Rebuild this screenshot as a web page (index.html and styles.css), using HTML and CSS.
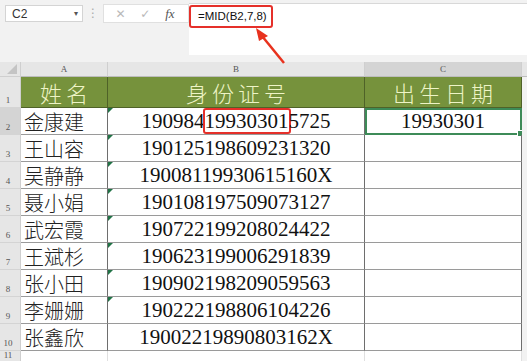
FILE: index.html
```html
<!DOCTYPE html>
<html lang="zh-CN">
<head>
    <meta charset="UTF-8">
    <title>MID</title>
    <link rel="stylesheet" href="styles.css">
</head>
<body>
    <div class="sheet">
        <div class="toolbar">
            <div class="name-box"><span>C2</span><span class="caret">▾</span></div>
            <div class="grip">⋮</div>
            <div class="fx-group">
                <span class="fx-btn">✕</span>
                <span class="fx-btn">✓</span>
                <span class="fx-btn fx">fx</span>
            </div>
            <div class="formula"><span class="formula-text">=MID(B2,7,8)</span></div>
        </div>

        <div class="grid">
            <div class="corner"><span class="corner-tri"></span></div>
            <div class="col-head">A</div>
            <div class="col-head">B</div>
            <div class="col-head sel">C</div>
            <div class="col-head tail"></div>

            <div class="row-head">1</div>
            <div class="cell title name">姓名</div>
            <div class="cell title">身份证号</div>
            <div class="cell title">出生日期</div>
            <div class="cell tail"></div>

            <div class="row-head sel">2</div>
            <div class="cell name">金康建</div>
            <div class="cell id mark">190984<span class="hit">19930301</span>5725</div>
            <div class="cell id active">19930301</div>
            <div class="cell tail"></div>

            <div class="row-head">3</div>
            <div class="cell name">王山容</div>
            <div class="cell id mark">190125198609231320</div>
            <div class="cell"></div>
            <div class="cell tail"></div>

            <div class="row-head">4</div>
            <div class="cell name">吴静静</div>
            <div class="cell id mark">19008119930615160X</div>
            <div class="cell"></div>
            <div class="cell tail"></div>

            <div class="row-head">5</div>
            <div class="cell name">聂小娟</div>
            <div class="cell id mark">190108197509073127</div>
            <div class="cell"></div>
            <div class="cell tail"></div>

            <div class="row-head">6</div>
            <div class="cell name">武宏霞</div>
            <div class="cell id mark">190722199208024422</div>
            <div class="cell"></div>
            <div class="cell tail"></div>

            <div class="row-head">7</div>
            <div class="cell name">王斌杉</div>
            <div class="cell id mark">190623199006291839</div>
            <div class="cell"></div>
            <div class="cell tail"></div>

            <div class="row-head">8</div>
            <div class="cell name">张小田</div>
            <div class="cell id mark">190902198209059563</div>
            <div class="cell"></div>
            <div class="cell tail"></div>

            <div class="row-head">9</div>
            <div class="cell name">李姗姗</div>
            <div class="cell id mark">190222198806104226</div>
            <div class="cell"></div>
            <div class="cell tail"></div>

            <div class="row-head">10</div>
            <div class="cell name">张鑫欣</div>
            <div class="cell id">19002219890803162X</div>
            <div class="cell"></div>
            <div class="cell tail"></div>

            <div class="row-head">11</div>
            <div class="cell blank"></div>
            <div class="cell blank"></div>
            <div class="cell blank"></div>
            <div class="cell tail"></div>
        </div>

        <svg class="arrow" width="527" height="80" viewBox="0 0 527 80">
            <line x1="284" y1="63" x2="262" y2="36" stroke="#e8321e" stroke-width="2.5"/>
            <polygon points="256,28 268,36 259,41" fill="#e8321e"/>
        </svg>
    </div>
</body>
</html>
```

FILE: styles.css
```css
body {
    margin: 0;
    background: #f2f2f2;
    font-family: "Liberation Serif", "Noto Sans CJK SC", serif;
}
.sheet {
    position: relative;
    width: 527px;
    height: 361px;
    overflow: hidden;
}
.toolbar {
    display: flex;
    align-items: flex-start;
    height: 62px;
    box-sizing: border-box;
    background: #f2f2f2;
}
.name-box {
    display: flex;
    justify-content: space-between;
    align-items: center;
    margin: 5px 0 0 5px;
    width: 78px;
    height: 17px;
    box-sizing: border-box;
    padding: 0 4px 0 6px;
    background: #fff;
    border: 1px solid #d4d4d4;
    font-family: "Liberation Sans", sans-serif;
    font-size: 12px;
    color: #333;
}
.caret {
    font-size: 8px;
    color: #555;
}
.grip {
    width: 20px;
    margin-top: 5px;
    text-align: center;
    font-family: "DejaVu Sans", sans-serif;
    font-size: 12px;
    line-height: 17px;
    color: #aaa;
}
.fx-group {
    display: flex;
    align-items: center;
    justify-content: space-around;
    margin-top: 4px;
    width: 86px;
    height: 19px;
    background: #fff;
    border: 1px solid #e0e0e0;
    box-sizing: border-box;
    padding: 0 6px 0 4px;
}
.fx-btn {
    font-family: "DejaVu Sans", sans-serif;
    font-size: 12px;
    color: #b8b8b8;
}
.fx {
    font-family: "Liberation Serif", serif;
    font-style: italic;
    font-size: 13px;
    color: #555;
}
.formula {
    flex: 1;
    height: 52px;
    margin-top: 3px;
    background: #fff;
    border-top: 1px solid #d8d8d8;
    box-sizing: border-box;
}
.formula-text {
    display: inline-block;
    margin: 1px 0 0 0;
    padding: 2px 4px 2px 7px;
    border: 2px solid #e5302a;
    border-radius: 3px;
    font-family: "Liberation Sans", sans-serif;
    font-size: 11.5px;
    line-height: 15px;
    color: #111;
}
.grid {
    display: grid;
    grid-template-columns: 21px 87px 257px 157px 5px;
    grid-template-rows: 15px 31px repeat(9, 27px) 12px;
    background: #fff;
}
.grid > div {
    box-sizing: border-box;
}
.corner {
    background: #e6e6e6;
    border-right: 1px solid #cfcfcf;
    border-bottom: 1px solid #cfcfcf;
    position: relative;
}
.corner-tri {
    position: absolute;
    right: 3px;
    bottom: 2px;
    width: 0;
    height: 0;
    border-left: 10px solid transparent;
    border-bottom: 10px solid #c4c4c4;
}
.col-head {
    background: #e6e6e6;
    border-right: 1px solid #cfcfcf;
    border-bottom: 1px solid #bdbdbd;
    text-align: center;
    font-size: 9px;
    line-height: 14px;
    color: #555;
}
.col-head.sel {
    background: #d4d4d4;
}
.col-head.tail {
    border-right: none;
}
.row-head {
    background: #e6e6e6;
    border-right: 1px solid #cfcfcf;
    border-bottom: 1px solid #d4d4d4;
    display: flex;
    align-items: flex-end;
    justify-content: center;
    padding: 0 4px 2px 0;
    font-size: 9px;
    color: #555;
}
.row-head.sel {
    background: #d4d4d4;
}
.cell {
    position: relative;
    display: flex;
    align-items: center;
    justify-content: center;
    border-right: 1px solid #6e6e6e;
    border-bottom: 1px solid #9a9a9a;
    font-size: 21px;
    color: #111;
    white-space: nowrap;
}
.cell.name {
    justify-content: flex-start;
    padding-left: 3px;
    font-size: 20px;
    font-weight: 300;
    color: #222;
}
.cell.title {
    background: #76923c;
    color: #eef4c6;
    font-size: 22px;
    font-weight: 300;
    letter-spacing: 4px;
    padding-left: 4px;
    border-bottom: 1px solid #4f6228;
    border-right: 1px solid #4f6228;
}
.cell.title.name {
    justify-content: center;
    padding-left: 4px;
    color: #eef4c6;
}
.cell.tail {
    background: #f2f2f2;
    border-right: none;
    border-bottom: none;
}
.cell.blank {
    border-right: 1px solid #e0e0e0;
    border-bottom: none;
}
.cell.mark::before {
    content: "";
    position: absolute;
    left: 0;
    top: 0;
    border-top: 5px solid #217346;
    border-right: 5px solid transparent;
}
.cell.active {
    outline: 2px solid #3d8b58;
    outline-offset: -2px;
}
.cell.active::after {
    content: "";
    position: absolute;
    right: -3px;
    bottom: -3px;
    width: 5px;
    height: 5px;
    background: #3d8b58;
    border: 1px solid #fff;
}
.hit {
    border: 2px solid #e5302a;
    border-radius: 3px;
    margin: 0 -2px;
    line-height: 22px;
}
.arrow {
    position: absolute;
    left: 0;
    top: 0;
    pointer-events: none;
}
```
